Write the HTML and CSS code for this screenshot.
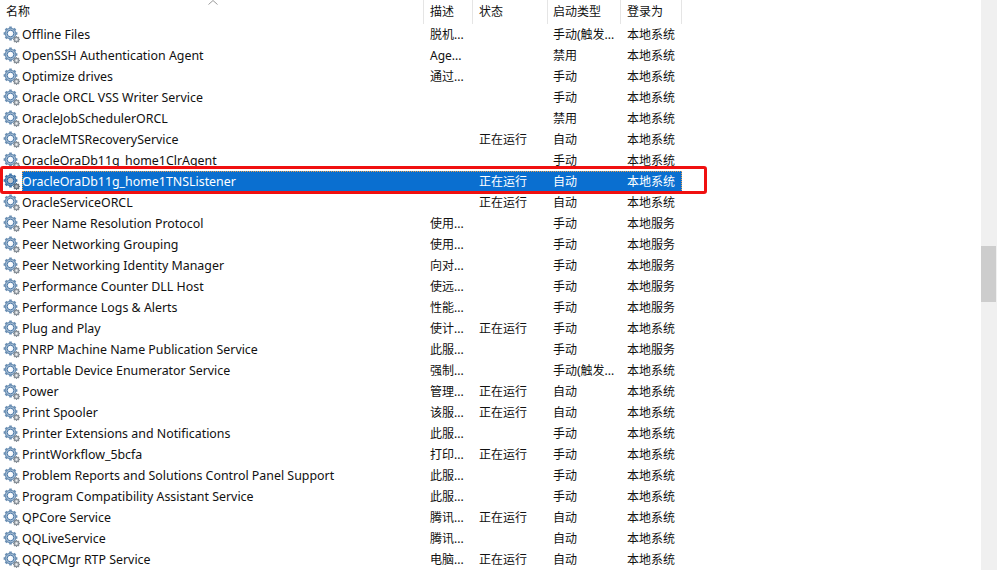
FILE: index.html
```html
<!DOCTYPE html>
<html lang="zh">
<head>
<meta charset="utf-8">
<title>服务</title>
<link rel="stylesheet" href="styles.css">
</head>
<body>
<svg class="defs" width="0" height="0" aria-hidden="true">
  <symbol id="gear" viewBox="0 0 18 18">
    <g stroke="#6f92b6" stroke-width="2.6" stroke-linecap="butt">
      <path d="M7.5 0.6V14.4M.6 7.5H14.4M2.6 2.6L12.4 12.4M12.4 2.6L2.6 12.4"/>
    </g>
    <circle cx="7.5" cy="7.5" r="5.4" fill="#9db6cf" stroke="#5f86ad" stroke-width="1"/>
    <circle cx="7.500" cy="7.500" r="3.300" fill="#f4f8fd" stroke="#4f7ba8" stroke-width="1"/>
    <circle cx="7" cy="7" r="1.500" fill="#ffffff"/>
    <g stroke="#8a929a" stroke-width="1.300">
      <path d="M13.5 10V17M10 13.5H17M11 11L16 16M16 11L11 16"/>
    </g>
    <circle cx="13.500" cy="13.500" r="2.300" fill="#b5bcc3" stroke="#78818a" stroke-width=".8"/>
    <circle cx="13.500" cy="13.500" r=".9" fill="#f4f4f4"/>
  </symbol>
</svg>
<main class="list">
  <header class="row head">
    <div class="c name">名称<svg class="sort" width="10" height="5" viewBox="0 0 10 5"><path d="M.5 4.5L5 .5L9.500 4.500" fill="none" stroke="#9a9a9a"/></svg></div>
    <div class="c desc">描述</div>
    <div class="c state">状态</div>
    <div class="c start">启动类型</div>
    <div class="c login">登录为</div>
  </header>
  <div class="row"><svg class="ico"><use href="#gear"/></svg><div class="c name">Offline Files</div><div class="c desc">脱机...</div><div class="c state"></div><div class="c start">手动(触发...</div><div class="c login">本地系统</div></div>
  <div class="row"><svg class="ico"><use href="#gear"/></svg><div class="c name">OpenSSH Authentication Agent</div><div class="c desc">Age...</div><div class="c state"></div><div class="c start">禁用</div><div class="c login">本地系统</div></div>
  <div class="row"><svg class="ico"><use href="#gear"/></svg><div class="c name">Optimize drives</div><div class="c desc">通过...</div><div class="c state"></div><div class="c start">手动</div><div class="c login">本地系统</div></div>
  <div class="row"><svg class="ico"><use href="#gear"/></svg><div class="c name">Oracle ORCL VSS Writer Service</div><div class="c desc"></div><div class="c state"></div><div class="c start">手动</div><div class="c login">本地系统</div></div>
  <div class="row"><svg class="ico"><use href="#gear"/></svg><div class="c name">OracleJobSchedulerORCL</div><div class="c desc"></div><div class="c state"></div><div class="c start">禁用</div><div class="c login">本地系统</div></div>
  <div class="row"><svg class="ico"><use href="#gear"/></svg><div class="c name">OracleMTSRecoveryService</div><div class="c desc"></div><div class="c state">正在运行</div><div class="c start">自动</div><div class="c login">本地系统</div></div>
  <div class="row"><svg class="ico"><use href="#gear"/></svg><div class="c name">OracleOraDb11g_home1ClrAgent</div><div class="c desc"></div><div class="c state"></div><div class="c start">手动</div><div class="c login">本地系统</div></div>
  <div class="row selected"><svg class="ico"><use href="#gear"/></svg><div class="band"><div class="c name">OracleOraDb11g_home1TNSListener</div><div class="c desc"></div><div class="c state">正在运行</div><div class="c start">自动</div><div class="c login">本地系统</div></div></div>
  <div class="row"><svg class="ico"><use href="#gear"/></svg><div class="c name">OracleServiceORCL</div><div class="c desc"></div><div class="c state">正在运行</div><div class="c start">自动</div><div class="c login">本地系统</div></div>
  <div class="row"><svg class="ico"><use href="#gear"/></svg><div class="c name">Peer Name Resolution Protocol</div><div class="c desc">使用...</div><div class="c state"></div><div class="c start">手动</div><div class="c login">本地服务</div></div>
  <div class="row"><svg class="ico"><use href="#gear"/></svg><div class="c name">Peer Networking Grouping</div><div class="c desc">使用...</div><div class="c state"></div><div class="c start">手动</div><div class="c login">本地服务</div></div>
  <div class="row"><svg class="ico"><use href="#gear"/></svg><div class="c name">Peer Networking Identity Manager</div><div class="c desc">向对...</div><div class="c state"></div><div class="c start">手动</div><div class="c login">本地服务</div></div>
  <div class="row"><svg class="ico"><use href="#gear"/></svg><div class="c name">Performance Counter DLL Host</div><div class="c desc">使远...</div><div class="c state"></div><div class="c start">手动</div><div class="c login">本地服务</div></div>
  <div class="row"><svg class="ico"><use href="#gear"/></svg><div class="c name">Performance Logs &amp; Alerts</div><div class="c desc">性能...</div><div class="c state"></div><div class="c start">手动</div><div class="c login">本地服务</div></div>
  <div class="row"><svg class="ico"><use href="#gear"/></svg><div class="c name">Plug and Play</div><div class="c desc">使计...</div><div class="c state">正在运行</div><div class="c start">手动</div><div class="c login">本地系统</div></div>
  <div class="row"><svg class="ico"><use href="#gear"/></svg><div class="c name">PNRP Machine Name Publication Service</div><div class="c desc">此服...</div><div class="c state"></div><div class="c start">手动</div><div class="c login">本地服务</div></div>
  <div class="row"><svg class="ico"><use href="#gear"/></svg><div class="c name">Portable Device Enumerator Service</div><div class="c desc">强制...</div><div class="c state"></div><div class="c start">手动(触发...</div><div class="c login">本地系统</div></div>
  <div class="row"><svg class="ico"><use href="#gear"/></svg><div class="c name">Power</div><div class="c desc">管理...</div><div class="c state">正在运行</div><div class="c start">自动</div><div class="c login">本地系统</div></div>
  <div class="row"><svg class="ico"><use href="#gear"/></svg><div class="c name">Print Spooler</div><div class="c desc">该服...</div><div class="c state">正在运行</div><div class="c start">自动</div><div class="c login">本地系统</div></div>
  <div class="row"><svg class="ico"><use href="#gear"/></svg><div class="c name">Printer Extensions and Notifications</div><div class="c desc">此服...</div><div class="c state"></div><div class="c start">手动</div><div class="c login">本地系统</div></div>
  <div class="row"><svg class="ico"><use href="#gear"/></svg><div class="c name">PrintWorkflow_5bcfa</div><div class="c desc">打印...</div><div class="c state">正在运行</div><div class="c start">手动</div><div class="c login">本地系统</div></div>
  <div class="row"><svg class="ico"><use href="#gear"/></svg><div class="c name">Problem Reports and Solutions Control Panel Support</div><div class="c desc">此服...</div><div class="c state"></div><div class="c start">手动</div><div class="c login">本地系统</div></div>
  <div class="row"><svg class="ico"><use href="#gear"/></svg><div class="c name">Program Compatibility Assistant Service</div><div class="c desc">此服...</div><div class="c state"></div><div class="c start">手动</div><div class="c login">本地系统</div></div>
  <div class="row"><svg class="ico"><use href="#gear"/></svg><div class="c name">QPCore Service</div><div class="c desc">腾讯...</div><div class="c state">正在运行</div><div class="c start">自动</div><div class="c login">本地系统</div></div>
  <div class="row"><svg class="ico"><use href="#gear"/></svg><div class="c name">QQLiveService</div><div class="c desc">腾讯...</div><div class="c state"></div><div class="c start">自动</div><div class="c login">本地系统</div></div>
  <div class="row"><svg class="ico"><use href="#gear"/></svg><div class="c name">QQPCMgr RTP Service</div><div class="c desc">电脑...</div><div class="c state">正在运行</div><div class="c start">自动</div><div class="c login">本地系统</div></div>
  <div class="mark"></div>
</main>
<aside class="scrollbar"><div class="thumb"></div></aside>
</body>
</html>
```
FILE: styles.css
```css
* { box-sizing: border-box; }
html, body { margin: 0; height: 100%; overflow: hidden; background: #fff; }
body {
  display: flex;
  width: 997px;
  height: 570px;
  font-family: "Noto Sans", "Noto Sans CJK SC", sans-serif;
  font-size: 12px;
  color: #111;
}
.defs { position: absolute; }
.list { position: relative; flex: 1; overflow: hidden; }
.row {
  display: flex;
  align-items: center;
  height: 21px;
  white-space: nowrap;
}
.ico { flex: none; width: 18px; height: 18px; margin-left: 3px; margin-right: 1px; }
.band { display: flex; align-items: center; height: 21px; }
.c { overflow: hidden; padding-left: 6px; }
.name { width: 402px; padding-left: 0; font-size: 12.4px; }
.desc { width: 49px; padding-bottom: 1px; }
.state { width: 75px; padding-bottom: 1px; }
.start { width: 73px; padding-left: 5px; padding-bottom: 1px; }
.login { width: 61px; padding-left: 6px; padding-bottom: 1px; }
.head { height: 24px; align-items: flex-start; position: relative; }
.head .c { height: 24px; border-right: 1px solid #e5e5e5; position: relative; padding-top: 2px; padding-bottom: 0; font-size: 12px; }
.head .name { width: 424px; padding-left: 6px; }
.sort { position: absolute; left: 208px; top: 0; }
.selected .ico { filter: brightness(.8) saturate(1.8); }
.selected .band {
  background: #0a6fd0;
  color: #fff;
  outline: 1px dotted #e8a050;
  outline-offset: -1px;
}
.mark {
  position: absolute;
  left: 0;
  top: 166px;
  width: 707px;
  height: 28px;
  border: 3px solid #f01010;
  border-radius: 3px;
  pointer-events: none;
}
.scrollbar { flex: none; width: 16px; background: #f0f0f0; padding-top: 246px; }
.thumb { width: 15px; height: 56px; background: #cdcdcd; }
```
